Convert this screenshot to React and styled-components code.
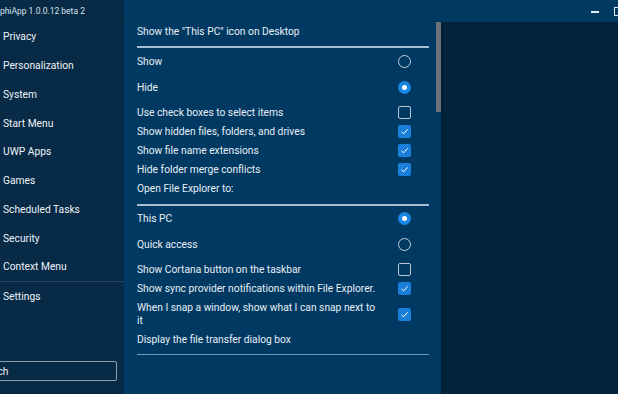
import React from "react";
import styled, { createGlobalStyle } from "styled-components";

const Global = createGlobalStyle`
  html, body { margin: 0; padding: 0; background: #03243d; }
  body { font-family: Roboto, "Noto Sans", "Liberation Sans", sans-serif; }
  * { box-sizing: border-box; }
`;

const Window = styled.div`
  display: flex;
  width: 618px;
  height: 394px;
  overflow: hidden;
  color: #e8eef4;
  font-size: 10.25px;
`;

const Sidebar = styled.aside`
  width: 124px;
  flex: none;
  background: #072a47;
  display: flex;
  flex-direction: column;
  overflow: hidden;
`;

const AppTitle = styled.div`
  height: 22.5px;
  display: flex;
  align-items: center;
  margin-left: -10px;
  white-space: nowrap;
  font-size: 8.5px;
  color: #d9e2ea;
`;

const NavItem = styled.div`
  height: 28.75px;
  display: flex;
  align-items: center;
  padding-left: 3px;
  white-space: nowrap;
  color: #eef3f7;
`;

const NavDivider = styled.div`
  height: 1px;
  background: #2a4863;
`;

const SearchBox = styled.div`
  margin: auto 0 13px -30px;
  width: 147px;
  height: 20px;
  border: 1px solid #8d9dac;
  border-radius: 2px;
  display: flex;
  align-items: center;
  padding-left: 6px;
  color: #eef3f7;
  white-space: nowrap;
`;

const Main = styled.div`
  flex: 1;
  display: flex;
  flex-direction: column;
  min-width: 0;
  overflow: hidden;
`;

const TitleBar = styled.div`
  height: 22px;
  flex: none;
  background: #003a63;
  display: flex;
  justify-content: flex-end;
  align-items: center;
  gap: 15px;
`;

const MinimizeGlyph = styled.span`
  width: 8px;
  height: 1.5px;
  background: #e6edf3;
  margin-top: 2px;
`;

const MaximizeGlyph = styled.span`
  width: 10px;
  height: 9px;
  flex: none;
  border: 1px solid #e6edf3;
  margin-right: -6px;
`;

const Body = styled.div`
  flex: 1;
  display: flex;
  min-height: 0;
`;

const Panel = styled.section`
  width: 317px;
  flex: none;
  background: #003a63;
  display: flex;
  padding-left: 13px;
  gap: 7px;
  box-shadow: 1px 0 3px rgba(0, 0, 0, 0.25);
  position: relative;
  z-index: 1;
`;

const Settings = styled.div`
  width: 292px;
  display: flex;
  flex-direction: column;
`;

const ScrollTrack = styled.div`
  width: 5px;
  display: flex;
  flex-direction: column;
`;

const ScrollThumb = styled.div`
  height: 90px;
  background: #6c7279;
`;

const Header = styled.div`
  height: 19px;
  display: flex;
  align-items: center;
  margin-bottom: 5px;
`;

const Divider = styled.div`
  height: ${(p) => (p.$thin ? "1px" : "2px")};
  background: ${(p) => (p.$thin ? "#6f9dc4" : "#a6bfd7")};
  margin-top: ${(p) => p.$mt || 0}px;
  flex: none;
`;

const Row = styled.div`
  display: grid;
  grid-template-columns: 1fr 13px;
  column-gap: 10px;
  align-items: center;
  padding-right: 18px;
  height: ${(p) => p.$h}px;
  margin-top: ${(p) => p.$mt || 0}px;
  flex: none;
`;

const Label = styled.span`
  max-width: 245px;
  line-height: 13px;
`;

const Radio = styled.span`
  width: 13px;
  height: 13px;
  border-radius: 50%;
  border: ${(p) => (p.$on ? "none" : "1px solid #c3cfdb")};
  background: ${(p) => (p.$on ? "#1a86e3" : "transparent")};
  display: flex;
  align-items: center;
  justify-content: center;
  &::after {
    content: "";
    display: ${(p) => (p.$on ? "block" : "none")};
    width: 5px;
    height: 5px;
    border-radius: 50%;
    background: #fff;
  }
`;

const Box = styled.span`
  width: 13px;
  height: 13px;
  border-radius: 2px;
  border: ${(p) => (p.$on ? "none" : "1.5px solid #b9c5d1")};
  background: ${(p) => (p.$on ? "#1a7fd8" : "transparent")};
  display: flex;
  align-items: center;
  justify-content: center;
`;

const Dark = styled.div`
  flex: 1;
  background: #03243d;
`;

const Check = ({ on }) => (
  <Box $on={on}>
    {on && (
      <svg width="13" height="13" viewBox="0 0 13 13">
        <polyline points="3.5,6.8 5.6,8.8 9.6,4.4" fill="none" stroke="#fff" strokeWidth="1" />
      </svg>
    )}
  </Box>
);

const nav = [
  "Privacy",
  "Personalization",
  "System",
  "Start Menu",
  "UWP Apps",
  "Games",
  "Scheduled Tasks",
  "Security",
  "Context Menu",
];

export default function App() {
  return (
    <>
      <Global />
      <Window>
        <Sidebar>
          <AppTitle>SophiApp 1.0.0.12 beta 2</AppTitle>
          {nav.map((n) => (
            <NavItem key={n}>{n}</NavItem>
          ))}
          <NavDivider />
          <NavItem>Settings</NavItem>
          <SearchBox>Search</SearchBox>
        </Sidebar>
        <Main>
          <TitleBar>
            <MinimizeGlyph />
            <MaximizeGlyph />
          </TitleBar>
          <Body>
            <Panel>
              <Settings>
                <Header>Show the "This PC" icon on Desktop</Header>
                <Divider />
                <Row $h={26}>
                  <Label>Show</Label>
                  <Radio />
                </Row>
                <Row $h={26}>
                  <Label>Hide</Label>
                  <Radio $on />
                </Row>
                <Row $h={19} $mt={3}>
                  <Label>Use check boxes to select items</Label>
                  <Check />
                </Row>
                <Row $h={19}>
                  <Label>Show hidden files, folders, and drives</Label>
                  <Check on />
                </Row>
                <Row $h={19}>
                  <Label>Show file name extensions</Label>
                  <Check on />
                </Row>
                <Row $h={19}>
                  <Label>Hide folder merge conflicts</Label>
                  <Check on />
                </Row>
                <Row $h={19}>
                  <Label>Open File Explorer to:</Label>
                </Row>
                <Divider $mt={6} />
                <Row $h={25}>
                  <Label>This PC</Label>
                  <Radio $on />
                </Row>
                <Row $h={26}>
                  <Label>Quick access</Label>
                  <Radio />
                </Row>
                <Row $h={19} $mt={3}>
                  <Label>Show Cortana button on the taskbar</Label>
                  <Check />
                </Row>
                <Row $h={19}>
                  <Label>Show sync provider notifications within File Explorer.</Label>
                  <Check on />
                </Row>
                <Row $h={32}>
                  <Label>When I snap a window, show what I can snap next to it</Label>
                  <Check on />
                </Row>
                <Row $h={19}>
                  <Label>Display the file transfer dialog box</Label>
                </Row>
                <Divider $thin $mt={5} />
              </Settings>
              <ScrollTrack>
                <ScrollThumb />
              </ScrollTrack>
            </Panel>
            <Dark />
          </Body>
        </Main>
      </Window>
    </>
  );
}
